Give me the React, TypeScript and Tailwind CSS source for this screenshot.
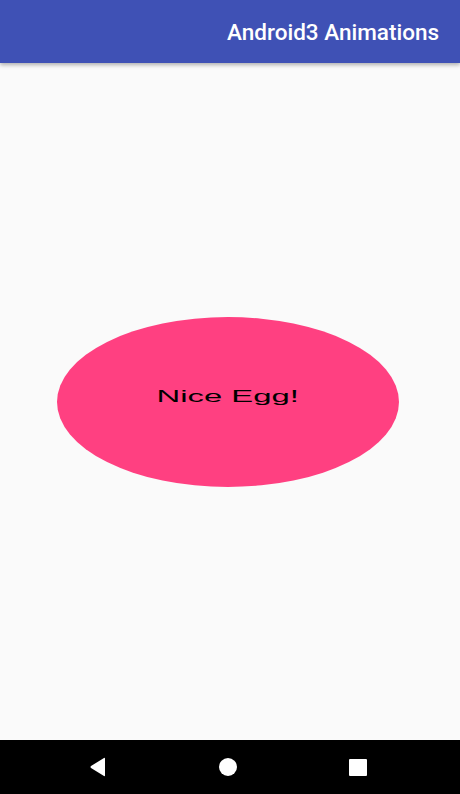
import React from 'react';

const App: React.FC = () => {
  return (
    <div className="flex h-[794px] w-[460px] flex-col overflow-hidden bg-[#fafafa] font-['Roboto',sans-serif]">
      <header className="relative z-10 flex h-[63px] shrink-0 items-center justify-end bg-[#3f51b5] pr-[21px] shadow-[0_2px_4px_rgba(0,0,0,0.3)]">
        <h1 className="pt-[2px] text-[22.5px] font-medium text-white">Android3 Animations</h1>
      </header>

      <main className="flex flex-1 items-center pl-[57px]">
        <div className="flex h-[170px] w-[342px] items-center justify-center rounded-[50%] bg-[#ff4081]">
          <span className="mb-[10px] inline-block scale-x-[2.05] font-['Liberation_Sans',Arial,sans-serif] text-[16px] leading-none text-black">
            Nice Egg!
          </span>
        </div>
      </main>

      <nav className="flex h-[54px] shrink-0 items-center gap-[112px] bg-black pl-[89px]">
        <svg width="18" height="20" viewBox="0 0 18 20" className="text-white">
          <path d="M16 1.5 L16 18.5 Q16 19.5 15 19 L2 11 Q1 10 2 9 L15 1 Q16 0.5 16 1.5 Z" fill="currentColor" />
        </svg>
        <span className="block h-[18px] w-[18px] rounded-full bg-white" />
        <span className="block h-[17px] w-[18px] rounded-[1px] bg-white" />
      </nav>
    </div>
  );
};

export default App;
